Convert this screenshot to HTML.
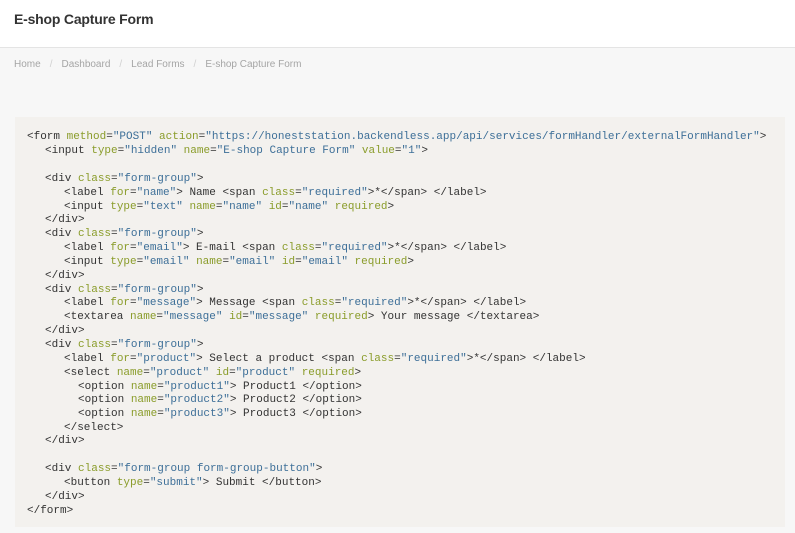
<!DOCTYPE html>
<html><head><meta charset="utf-8"><style>
*{margin:0;padding:0;box-sizing:border-box}
body{width:795px;height:533px;background:#f7f7f7;font-family:"Liberation Sans",sans-serif;overflow:hidden;position:relative}
.hdr{position:absolute;left:0;top:0;width:795px;height:48px;background:#fff;border-bottom:1px solid #e4e4e4}
.hdr h1{position:absolute;left:14px;top:11px;font-size:14px;font-weight:bold;color:#333;letter-spacing:-0.2px}
.bc{position:absolute;left:14px;top:59px;font-size:10px;color:#a5a5a5}
.bc span.s{color:#d0d0d0;margin:0 9px}
.code{position:absolute;left:15px;top:117px;width:770px;height:410px;background:#f3f1ee}
.l{position:absolute;left:27px;margin-top:2px;font-family:"Liberation Mono",monospace;font-size:11px;color:#333;white-space:pre;line-height:13px}
.a{color:#8a9c2a}.v{color:#3d6f98}
</style></head><body>
<div class="hdr"><h1>E-shop Capture Form</h1></div>
<div class="bc">Home<span class="s">/</span>Dashboard<span class="s">/</span>Lead Forms<span class="s">/</span>E-shop Capture Form</div>
<div class="code"></div>
<div class="l" style="top:129px">&lt;form <span class="a">method</span>=<span class="v">"POST"</span> <span class="a">action</span>=<span class="v">"https://honeststation.backendless.app/api/services/formHandler/externalFormHandler"</span>&gt;</div>
<div class="l" style="top:143px;left:45px">&lt;input <span class="a">type</span>=<span class="v">"hidden"</span> <span class="a">name</span>=<span class="v">"E-shop Capture Form"</span> <span class="a">value</span>=<span class="v">"1"</span>&gt;</div>
<div class="l" style="top:171px;left:45px">&lt;div <span class="a">class</span>=<span class="v">"form-group"</span>&gt;</div>
<div class="l" style="top:185px;left:64px">&lt;label <span class="a">for</span>=<span class="v">"name"</span>&gt; Name &lt;span <span class="a">class</span>=<span class="v">"required"</span>&gt;*&lt;/span&gt; &lt;/label&gt;</div>
<div class="l" style="top:199px;left:64px">&lt;input <span class="a">type</span>=<span class="v">"text"</span> <span class="a">name</span>=<span class="v">"name"</span> <span class="a">id</span>=<span class="v">"name"</span> <span class="a">required</span>&gt;</div>
<div class="l" style="top:212px;left:45px">&lt;/div&gt;</div>
<div class="l" style="top:226px;left:45px">&lt;div <span class="a">class</span>=<span class="v">"form-group"</span>&gt;</div>
<div class="l" style="top:240px;left:64px">&lt;label <span class="a">for</span>=<span class="v">"email"</span>&gt; E-mail &lt;span <span class="a">class</span>=<span class="v">"required"</span>&gt;*&lt;/span&gt; &lt;/label&gt;</div>
<div class="l" style="top:254px;left:64px">&lt;input <span class="a">type</span>=<span class="v">"email"</span> <span class="a">name</span>=<span class="v">"email"</span> <span class="a">id</span>=<span class="v">"email"</span> <span class="a">required</span>&gt;</div>
<div class="l" style="top:268px;left:45px">&lt;/div&gt;</div>
<div class="l" style="top:282px;left:45px">&lt;div <span class="a">class</span>=<span class="v">"form-group"</span>&gt;</div>
<div class="l" style="top:295px;left:64px">&lt;label <span class="a">for</span>=<span class="v">"message"</span>&gt; Message &lt;span <span class="a">class</span>=<span class="v">"required"</span>&gt;*&lt;/span&gt; &lt;/label&gt;</div>
<div class="l" style="top:309px;left:64px">&lt;textarea <span class="a">name</span>=<span class="v">"message"</span> <span class="a">id</span>=<span class="v">"message"</span> <span class="a">required</span>&gt; Your message &lt;/textarea&gt;</div>
<div class="l" style="top:323px;left:45px">&lt;/div&gt;</div>
<div class="l" style="top:337px;left:45px">&lt;div <span class="a">class</span>=<span class="v">"form-group"</span>&gt;</div>
<div class="l" style="top:351px;left:64px">&lt;label <span class="a">for</span>=<span class="v">"product"</span>&gt; Select a product &lt;span <span class="a">class</span>=<span class="v">"required"</span>&gt;*&lt;/span&gt; &lt;/label&gt;</div>
<div class="l" style="top:365px;left:64px">&lt;select <span class="a">name</span>=<span class="v">"product"</span> <span class="a">id</span>=<span class="v">"product"</span> <span class="a">required</span>&gt;</div>
<div class="l" style="top:379px;left:78px">&lt;option <span class="a">name</span>=<span class="v">"product1"</span>&gt; Product1 &lt;/option&gt;</div>
<div class="l" style="top:392px;left:78px">&lt;option <span class="a">name</span>=<span class="v">"product2"</span>&gt; Product2 &lt;/option&gt;</div>
<div class="l" style="top:406px;left:78px">&lt;option <span class="a">name</span>=<span class="v">"product3"</span>&gt; Product3 &lt;/option&gt;</div>
<div class="l" style="top:420px;left:64px">&lt;/select&gt;</div>
<div class="l" style="top:433px;left:45px">&lt;/div&gt;</div>
<div class="l" style="top:461px;left:45px">&lt;div <span class="a">class</span>=<span class="v">"form-group form-group-button"</span>&gt;</div>
<div class="l" style="top:475px;left:64px">&lt;button <span class="a">type</span>=<span class="v">"submit"</span>&gt; Submit &lt;/button&gt;</div>
<div class="l" style="top:489px;left:45px">&lt;/div&gt;</div>
<div class="l" style="top:503px">&lt;/form&gt;</div>
</body></html>
